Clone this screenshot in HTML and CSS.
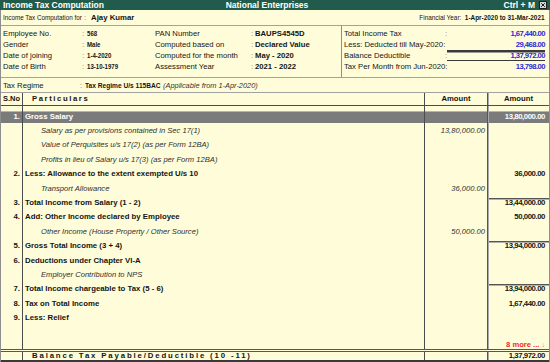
FILE: index.html
```html
<!DOCTYPE html>
<html>
<head>
<meta charset="utf-8">
<title>Income Tax Computation</title>
<link rel="stylesheet" href="styles.css">
</head>
<body>
<div class="win">
  <div class="titlebar">
    <span class="tt-left">Income Tax Computation</span>
    <span class="tt-mid">National Enterprises</span>
    <span class="tt-right">Ctrl + M
      <svg class="xbox" width="8" height="8" viewBox="0 0 8 8"><rect x="0.5" y="0.5" width="7" height="7" fill="#d6d6d6" stroke="#1e1e1e"/><path d="M2.2 2.2L5.8 5.8M5.8 2.2L2.2 5.8" stroke="#1e1e1e" stroke-width="1"/></svg>
    </span>
  </div>
  <div class="content">
    <div class="forrow">
      <div class="for-left">
        <span class="cond">Income Tax Computation for</span>
        <span class="colon">:</span>
        <b class="name">Ajay Kumar</b>
      </div>
      <div class="fy"><span class="cond-r">Financial Year:&nbsp; <b>1-Apr-2020 to 31-Mar-2021</b></span></div>
    </div>

    <div class="info">
      <div class="info-left">
        <span>Employee No.</span><span class="colon">:</span><span><b class="cv">568</b></span>
        <span>PAN Number</span><span class="colon">:</span><b>BAUPS4545D</b>

        <span>Gender</span><span class="colon">:</span><span><b class="cv">Male</b></span>
        <span>Computed based on</span><span class="colon">:</span><b>Declared Value</b>

        <span>Date of joining</span><span class="colon">:</span><span><b class="cv">1-4-2020</b></span>
        <span>Computed for the month</span><span class="colon">:</span><b>May - 2020</b>

        <span>Date of Birth</span><span class="colon">:</span><span><b class="cv">13-10-1979</b></span>
        <span>Assessment Year</span><span class="colon">:</span><b>2021 - 2022</b>
      </div>
      <div class="info-right">
        <span>Total Income Tax</span><span class="colon">:</span><b class="bv">1,67,440.00</b>
        <span>Less: Deducted till May-2020:</span><span class="colon"></span><b class="bv">29,468.00</b>
        <span>Balance Deductible</span><span class="colon">:</span><b class="bv boxed">1,37,972.00</b>
        <span>Tax Per Month from Jun-2020:</span><span class="colon"></span><b class="bv">13,798.00</b>
      </div>
    </div>

    <div class="regime">
      <span>Tax Regime</span><span class="colon">:</span>
      <span><b class="rv">Tax Regime U/s 115BAC</b> <i>(Applicable from 1-Apr-2020)</i></span>
    </div>

    <div class="tr head">
      <div class="c1">S.No</div>
      <div class="c2 spaced">Particulars</div>
      <div class="c3">Amount</div>
      <div class="c4">Amount</div>
    </div>

    <div class="tbody">
      <div class="tr sp"><div class="c1"></div><div class="c2"></div><div class="c3"></div><div class="c4"></div></div>

      <div class="tr row band"><div class="c1">1.</div><div class="c2">Gross Salary</div><div class="c3"></div><div class="c4 amt">13,80,000.00</div></div>
      <div class="tr row sub"><div class="c1"></div><div class="c2">Salary as per provisions contained in Sec 17(1)</div><div class="c3">13,80,000.00</div><div class="c4"></div></div>
      <div class="tr row sub"><div class="c1"></div><div class="c2">Value of Perquisites u/s 17(2) (as per Form 12BA)</div><div class="c3"></div><div class="c4"></div></div>
      <div class="tr row sub"><div class="c1"></div><div class="c2">Profits in lieu of Salary u/s 17(3) (as per Form 12BA)</div><div class="c3"></div><div class="c4"></div></div>
      <div class="tr row"><div class="c1">2.</div><div class="c2">Less: Allowance to the extent exempted U/s 10</div><div class="c3"></div><div class="c4 amt">36,000.00</div></div>
      <div class="tr row sub"><div class="c1"></div><div class="c2">Transport Allowance</div><div class="c3">36,000.00</div><div class="c4"></div></div>
      <div class="tr row"><div class="c1">3.</div><div class="c2">Total Income from Salary (1 - 2)</div><div class="c3"></div><div class="c4 amt ul">13,44,000.00</div></div>
      <div class="tr row"><div class="c1">4.</div><div class="c2">Add: Other Income declared by Employee</div><div class="c3"></div><div class="c4 amt">50,000.00</div></div>
      <div class="tr row sub"><div class="c1"></div><div class="c2">Other Income (House Property / Other Source)</div><div class="c3">50,000.00</div><div class="c4"></div></div>
      <div class="tr row"><div class="c1">5.</div><div class="c2">Gross Total Income (3 + 4)</div><div class="c3"></div><div class="c4 amt ul">13,94,000.00</div></div>
      <div class="tr row"><div class="c1">6.</div><div class="c2">Deductions under Chapter VI-A</div><div class="c3"></div><div class="c4"></div></div>
      <div class="tr row sub"><div class="c1"></div><div class="c2">Employer Contribution to NPS</div><div class="c3"></div><div class="c4"></div></div>
      <div class="tr row"><div class="c1">7.</div><div class="c2">Total Income chargeable to Tax (5 - 6)</div><div class="c3"></div><div class="c4 amt ul">13,94,000.00</div></div>
      <div class="tr row"><div class="c1">8.</div><div class="c2">Tax on Total Income</div><div class="c3"></div><div class="c4 amt">1,67,440.00</div></div>
      <div class="tr row"><div class="c1">9.</div><div class="c2">Less: Relief</div><div class="c3"></div><div class="c4"></div></div>

      <div class="tr fill"><div class="c1"></div><div class="c2"></div><div class="c3"></div><div class="c4 more"><span>8 more ... <span class="arrow">↓</span></span></div></div>
    </div>

    <div class="tr foot">
      <div class="c1"></div>
      <div class="c2 spaced2">Balance Tax Payable/Deductible (10 -11)</div>
      <div class="c3"></div>
      <div class="c4 amt">1,37,972.00</div>
    </div>
  </div>
</div>
</body>
</html>
```

FILE: styles.css
```css
* { box-sizing: border-box; margin: 0; padding: 0; }
html, body { width: 550px; height: 362px; overflow: hidden; }
body {
  background: #fffdd9;
  font-family: "Liberation Sans", Arial, sans-serif;
  font-size: 7.7px;
  color: #141414;
}
b { font-weight: bold; }

.win { display: flex; flex-direction: column; width: 550px; height: 362px; }

/* title bar */
.titlebar {
  height: 10px;
  background: #215b4c;
  color: #fff;
  font-weight: bold;
  font-size: 8.5px;
  line-height: 10px;
  display: grid;
  grid-template-columns: 1fr auto 1fr;
  padding: 0 3px;
  white-space: nowrap;
}
.tt-mid { margin-right: 16px; }
.tt-right { justify-self: end; display: flex; align-items: center; gap: 4px; }
.xbox { display: block; }

.content {
  flex: 1;
  display: flex;
  flex-direction: column;
  border-left: 1px solid #8e8e8e;
  border-right: 1px solid #8e8e8e;
  min-height: 0;
}

.colon { color: #7a7a7a; }

/* for row */
.forrow {
  height: 16px;
  border-bottom: 1px solid #a2a2a2;
  display: flex;
  align-items: center;
  justify-content: space-between;
  padding: 0 4px 0 2px;
  white-space: nowrap;
}
.for-left { display: grid; grid-template-columns: 81px 7px auto; align-items: center; }
.cond { display: inline-block; font-size: 8px; transform: scaleX(.79); transform-origin: 0 50%; }
.cond-r { display: inline-block; font-size: 8px; transform: scaleX(.8); transform-origin: 100% 50%; }
.name { font-size: 7.8px; }

/* info block */
.info {
  height: 52px;
  border-bottom: 1px solid #a2a2a2;
  display: grid;
  grid-template-columns: 340px 208px;
  white-space: nowrap;
}
.info-left {
  padding: 1.5px 0 0 2px;
  display: grid;
  grid-template-columns: 79px 5px 68px 96px 4px 86px;
  grid-auto-rows: 11.2px;
  line-height: 11.2px;
}
.cv { display: inline-block; transform: scaleX(.79); transform-origin: 0 50%; }
.info-right {
  border-left: 1px solid #8e8e8e;
  padding: 1.5px 4px 0 2px;
  display: grid;
  grid-template-columns: 101px 2px 98px;
  grid-auto-rows: 11.2px;
  line-height: 11.2px;
}
.bv { color: #2a2ad6; text-align: right; letter-spacing: -0.55px; }
.boxed {
  border-top: 2px solid #3a3a3a;
  border-bottom: 1px solid #3a3a3a;
  line-height: 8px;
  box-shadow: inset 0 1px 0 #9a9a9a;
}

/* regime */
.regime {
  height: 15px;
  border-bottom: 1px solid #a2a2a2;
  display: grid;
  grid-template-columns: 77px 5px auto;
  align-items: center;
  padding-left: 2px;
  white-space: nowrap;
}
.rv { display: inline-block; transform: scaleX(.86); transform-origin: 0 50%; margin-right: -12px; }
.regime i { color: #333; font-size: 7.4px; }

/* table */
.tr {
  display: grid;
  grid-template-columns: 21px 402px 63px 62px;
  white-space: nowrap;
}
.tr > div { overflow: visible; }
.c2, .c3 { border-left: 1px solid #4c4c4c; }
.c4 { border-left: 1px solid #555; box-shadow: inset 1px 0 0 #a8a8a8; }

.head {
  height: 13px;
  border-bottom: 1px solid #4c4c4c;
  font-weight: bold;
  line-height: 12px;
}
.head .c1 { padding-left: 2px; font-size: 7.5px; }
.head .c3, .head .c4 { text-align: center; }
.spaced { padding-left: 9px; letter-spacing: 1.6px; }

.tbody { flex: 1; display: flex; flex-direction: column; min-height: 0; }
.sp { height: 3.6px; }
.row { height: 14.4px; line-height: 14.4px; font-weight: bold; font-size: 7.8px; }
.row .c1 { text-align: right; padding-right: 2px; }
.row .c2 { padding-left: 2px; }
.row .c3 { text-align: right; padding-right: 2px; }
.amt { text-align: right; padding-right: 4px; letter-spacing: -0.45px; }

.sub { font-weight: normal; font-style: italic; font-size: 7.6px; color: #2e2e2e; }
.sub .c2 { padding-left: 18px; }

.band {
  color: #fff;
  background:
    linear-gradient(#b4b4b4, #b4b4b4) 0 1px / 100% 1px no-repeat,
    linear-gradient(#7b7b7b, #7b7b7b) 0 2px / 100% 11px no-repeat;
}

.ul {
  background:
    linear-gradient(#555, #555) 0 2px / 100% 1px no-repeat,
    linear-gradient(#b0b0b0, #b0b0b0) 0 3px / 100% 1px no-repeat;
}

.fill { flex: 1; }
.more {
  display: flex;
  align-items: flex-end;
  justify-content: flex-end;
  padding: 0 4px 0 0;
  color: #f02a2a;
  font-weight: bold;
  font-size: 7.6px;
  line-height: 9px;
}
.arrow { color: #f07070; font-weight: normal; font-size: 7px; }

.foot {
  height: 13px;
  border-top: 3px double #555;
  border-bottom: 2px solid #3a3a3a;
  line-height: 8px;
  font-weight: bold;
  font-size: 7.8px;
}
.spaced2 { padding-left: 9px; letter-spacing: 1.85px; }
```
